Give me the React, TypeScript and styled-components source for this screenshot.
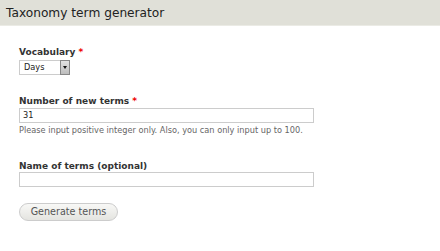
import styled, { createGlobalStyle } from 'styled-components';

const GlobalStyle = createGlobalStyle`
  body {
    margin: 0;
    background: #fff;
    font-family: 'DejaVu Sans', sans-serif;
    color: #333;
  }
`;

const Header = styled.header`
  background: #e0e0d8;
  height: 25px;
  padding: 0 6px;
  display: flex;
  align-items: center;
  font-size: 12.2px;
  color: #222;
  border-bottom: 1px solid #ebebe5;
`;

const Form = styled.form`
  padding: 21px 19px 0;
`;

const Field = styled.div<{ $gap: number }>`
  margin-bottom: ${({ $gap }) => $gap}px;
`;

const Label = styled.label<{ $space?: number }>`
  display: block;
  font-size: 9px;
  line-height: 11px;
  font-weight: bold;
  color: #333;
  margin-bottom: ${({ $space }) => $space ?? 0}px;
`;

const Req = styled.span`
  color: #e00;
`;

const Select = styled.div`
  box-sizing: border-box;
  width: 51px;
  height: 15px;
  border: 1px solid #ccc;
  border-right: none;
  display: flex;
  font-size: 8.2px;
  color: #222;
`;

const SelectText = styled.span`
  flex: 1;
  padding-left: 4px;
  line-height: 13px;
`;

const Arrow = styled.span`
  width: 8px;
  margin-top: -1px;
  margin-bottom: -1px;
  background: linear-gradient(#e2e2e2, #bdbdbd);
  border: 1px solid #888;
  display: flex;
  align-items: center;
  justify-content: center;
  &::after {
    content: '';
    border-left: 2px solid transparent;
    border-right: 2px solid transparent;
    border-top: 3px solid #111;
  }
`;

const Input = styled.div`
  box-sizing: border-box;
  width: 295px;
  height: 15px;
  border: 1px solid #ccc;
  font-size: 8.2px;
  color: #222;
  padding-left: 3px;
  line-height: 13px;
`;

const Description = styled.div`
  font-size: 8.2px;
  line-height: 10px;
  color: #666;
  margin-top: 2px;
`;

const Button = styled.button`
  box-sizing: border-box;
  font-family: 'DejaVu Sans', sans-serif;
  font-size: 9.6px;
  color: #555;
  height: 18px;
  width: 99px;
  border: 1px solid #ccc;
  border-radius: 9px;
  background: linear-gradient(#f8f8f6, #e4e4e0);
  padding: 0;
`;

export default function App() {
  return (
    <>
      <GlobalStyle />
      <Header>Taxonomy term generator</Header>
      <Form>
        <Field $gap={21}>
          <Label $space={2}>
            Vocabulary <Req>*</Req>
          </Label>
          <Select>
            <SelectText>Days</SelectText>
            <Arrow />
          </Select>
        </Field>
        <Field $gap={26}>
          <Label $space={1}>
            Number of new terms <Req>*</Req>
          </Label>
          <Input>31</Input>
          <Description>Please input positive integer only. Also, you can only input up to 100.</Description>
        </Field>
        <Field $gap={13}>
          <Label>Name of terms (optional)</Label>
          <Input />
        </Field>
        <Button type="button">Generate terms</Button>
      </Form>
    </>
  );
}
